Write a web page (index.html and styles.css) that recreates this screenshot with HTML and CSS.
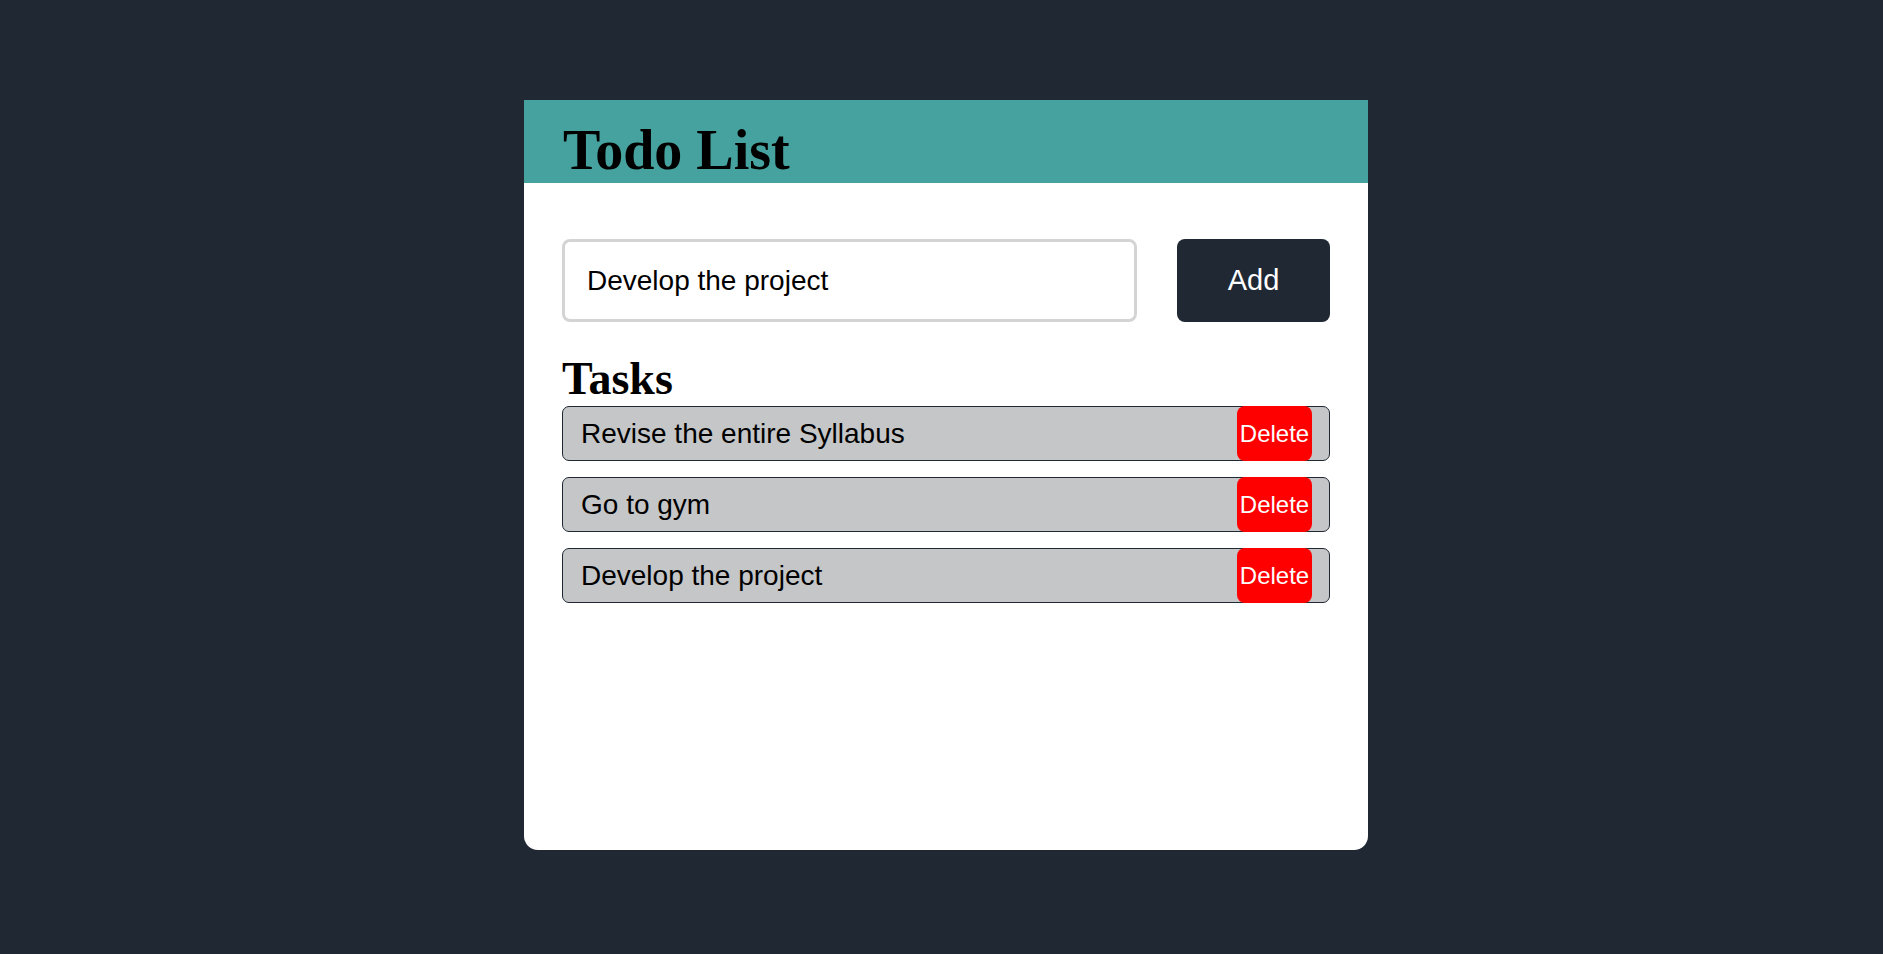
FILE: index.html
```html
<!DOCTYPE html>
<html lang="en">
<head>
<meta charset="UTF-8">
<title>Todo List</title>
<link rel="stylesheet" href="styles.css">
</head>
<body>
<div class="page">
  <div class="card">
    <header class="card-header">
      <h1 class="title">Todo List</h1>
    </header>
    <div class="card-body">
      <div class="add-row">
        <input class="task-input" type="text" value="Develop the project">
        <button class="add-btn">Add</button>
      </div>
      <h2 class="tasks-title">Tasks</h2>
      <ul class="task-list">
        <li class="task"><span class="task-text">Revise the entire Syllabus</span><button class="delete-btn">Delete</button></li>
        <li class="task"><span class="task-text">Go to gym</span><button class="delete-btn">Delete</button></li>
        <li class="task"><span class="task-text">Develop the project</span><button class="delete-btn">Delete</button></li>
      </ul>
    </div>
  </div>
</div>
</body>
</html>
```
FILE: styles.css
```css
* { box-sizing: border-box; }
html, body {
  margin: 0;
  padding: 0;
  height: 100%;
  background: #1f2833;
  font-family: "Liberation Sans", Arial, sans-serif;
}
.page {
  display: flex;
  justify-content: center;
  padding: 100px 0 0 9px;
}
.card {
  width: 844px;
  height: 750px;
  background: #ffffff;
  border-radius: 0 0 14px 14px;
  overflow: hidden;
}
.card-header {
  height: 83px;
  background: #45a29e;
  padding: 22px 39px 0;
}
.title {
  margin: 0;
  font-family: "Liberation Serif", "Times New Roman", serif;
  font-weight: bold;
  font-size: 56px;
  line-height: 1;
  color: #000;
}
.card-body {
  padding: 56px 38px 0;
}
.add-row {
  display: flex;
  gap: 40px;
}
.task-input {
  flex: 1;
  height: 83px;
  border: 3px solid #d4d4d4;
  border-radius: 8px;
  padding: 0 22px;
  font-family: "Liberation Sans", Arial, sans-serif;
  font-size: 28px;
  color: #000;
  background: #fff;
  outline: none;
}
.add-btn {
  width: 153px;
  height: 83px;
  border: none;
  border-radius: 8px;
  background: #1f2833;
  color: #fff;
  font-family: "Liberation Sans", Arial, sans-serif;
  font-size: 29px;
  padding: 0;
}
.tasks-title {
  margin: 34px 0 0;
  font-family: "Liberation Serif", "Times New Roman", serif;
  font-weight: bold;
  font-size: 46px;
  line-height: 1;
  color: #000;
}
.task-list {
  list-style: none;
  margin: 4px 0 0;
  padding: 0;
  display: flex;
  flex-direction: column;
  gap: 16px;
}
.task {
  height: 55px;
  display: flex;
  align-items: center;
  justify-content: space-between;
  background: #c5c6c7;
  border: 1px solid #1f2833;
  border-radius: 7px;
  padding: 0 17px 0 18px;
}
.task-text {
  font-size: 28px;
  color: #000;
}
.delete-btn {
  align-self: stretch;
  margin: -1px 0;
  width: 75px;
  border: none;
  border-radius: 8px;
  background: #ff0000;
  color: #fff;
  font-family: "Liberation Sans", Arial, sans-serif;
  font-size: 24px;
  padding: 0 2px;
}
```
